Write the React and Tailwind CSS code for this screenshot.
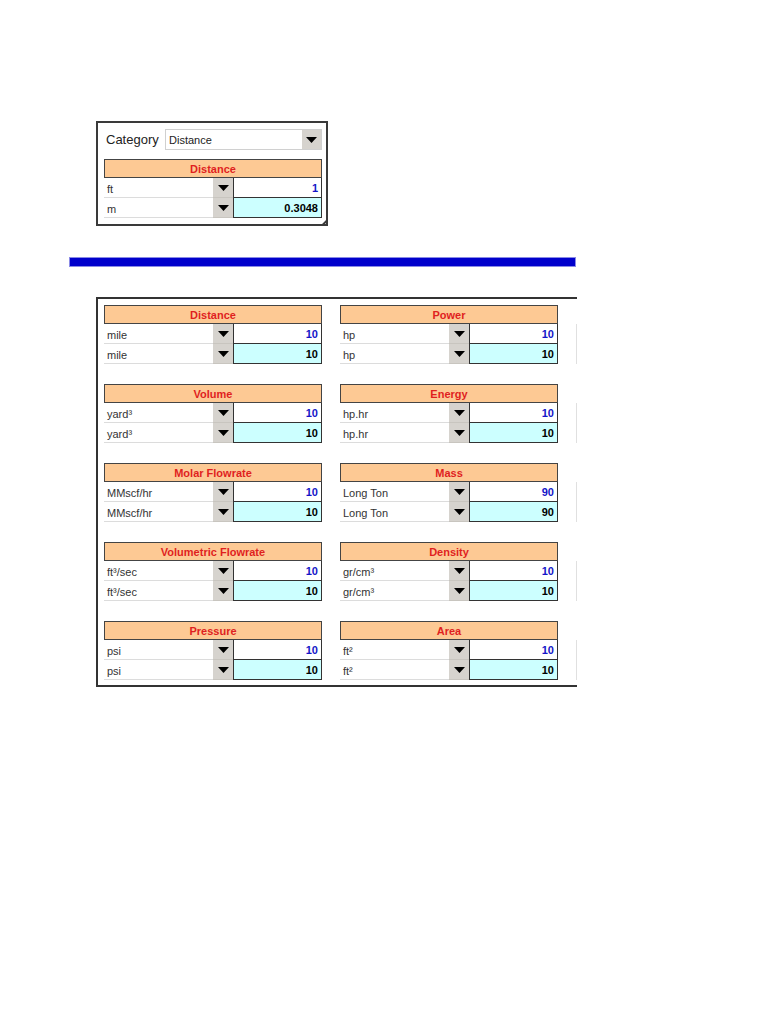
import React from 'react';

const font = { fontFamily: '"Liberation Sans", Arial, sans-serif' };

const converters = [
  { title: 'Distance', unit: 'mile', from: '10', to: '10' },
  { title: 'Power', unit: 'hp', from: '10', to: '10' },
  { title: 'Volume', unit: 'yard³', from: '10', to: '10' },
  { title: 'Energy', unit: 'hp.hr', from: '10', to: '10' },
  { title: 'Molar Flowrate', unit: 'MMscf/hr', from: '10', to: '10' },
  { title: 'Mass', unit: 'Long Ton', from: '90', to: '90' },
  { title: 'Volumetric Flowrate', unit: 'ft³/sec', from: '10', to: '10' },
  { title: 'Density', unit: 'gr/cm³', from: '10', to: '10' },
  { title: 'Pressure', unit: 'psi', from: '10', to: '10' },
  { title: 'Area', unit: 'ft²', from: '10', to: '10' },
];

// little black arrow on the grey dropdown button
const DropButton = ({ className = '' }) => (
  <div className={`flex items-center justify-center bg-[#d6d3ce] ${className}`}>
    <svg width="11" height="6" viewBox="0 0 11 6">
      <path d="M0 0 H11 L5.5 6 Z" fill="#000" />
    </svg>
  </div>
);

const UnitRow = ({ unit, value, result }) => (
  <div className="flex h-[20px]">
    <div className="flex w-[109px] items-center border-b border-[#dcdcdc] bg-white pl-[3px] pt-[3px] text-[11px] text-[#333]">
      {unit}
    </div>
    <DropButton className="w-[20px] border-b border-[#c8c5bf]" />
    <div
      className={`flex w-[89px] items-center justify-end border-x border-b border-[#333] pr-[3px] pt-[2px] text-[11px] font-bold ${
        result ? 'bg-[#ccffff] text-black' : 'bg-white text-[#1414c8]'
      }`}
    >
      {value}
    </div>
  </div>
);

const Converter = ({ title, unit, from, to }) => (
  <div className="w-[218px]">
    <div className="flex h-[19px] items-center justify-center border border-[#444] bg-[#fdc994] pt-[1px] text-[11px] font-bold text-[#e01f1f]">
      {title}
    </div>
    <UnitRow unit={unit} value={from} />
    <UnitRow unit={unit} value={to} result />
  </div>
);

// faint edge of the next column, cut off by the sheet
const CutColumn = () => (
  <div className="flex h-[59px] flex-col pt-[19px]">
    <div className="h-[40px] border-l border-[#e0e0e0]" />
  </div>
);

export default function App() {
  const rows = [];
  for (let i = 0; i < converters.length; i += 2) {
    rows.push([converters[i], converters[i + 1]]);
  }

  return (
    <div className="min-h-[1024px] w-[768px] bg-white pl-[69px] pt-[121px]" style={font}>
      {/* quick converter */}
      <div className="relative ml-[27px] w-[232px] border-2 border-[#3a3a3a] bg-white pb-[6px] pl-[6px] pr-[4px] pt-[6px]">
        <div className="flex h-[21px] items-center">
          <span className="w-[61px] pl-[2px] pt-[1px] text-[13px] text-[#222]">Category</span>
          <div className="flex h-[21px] w-[157px] items-center border border-[#d0d0d0] bg-white">
            <span className="flex-1 pl-[3px] pt-[2px] text-[11px] text-[#222]">Distance</span>
            <DropButton className="h-[19px] w-[19px]" />
          </div>
        </div>
        <div className="mt-[9px] w-[218px]">
          <div className="flex h-[19px] items-center justify-center border border-[#444] bg-[#fdc994] pt-[1px] text-[11px] font-bold text-[#e01f1f]">
            Distance
          </div>
          <UnitRow unit="ft" value="1" />
          <UnitRow unit="m" value="0.3048" result />
        </div>
        <svg className="absolute -bottom-[2px] -right-[2px]" width="9" height="9" viewBox="0 0 9 9">
          <path d="M9 0 V3 L3 9 H0 V7 H6 L7 6 V0 Z" fill="#fff" />
          <path d="M8 0 V3.5 L3.5 8 H0" fill="none" stroke="#3a3a3a" strokeWidth="2" />
        </svg>
      </div>

      <div className="mt-[31px] h-[10px] w-[507px] border border-[#8a8ae6] bg-[#0000cc]" />

      {/* all converters */}
      <div className="ml-[27px] mt-[30px] w-[481px] overflow-hidden border-b-2 border-l-2 border-t-2 border-[#333] pb-[5px] pl-[6px] pt-[6px]">
        <div className="flex w-[600px] flex-col gap-[20px]">
          {rows.map(([a, b]) => (
            <div key={a.title} className="flex gap-[18px]">
              <Converter {...a} />
              <Converter {...b} />
              <CutColumn />
            </div>
          ))}
        </div>
      </div>
    </div>
  );
}
